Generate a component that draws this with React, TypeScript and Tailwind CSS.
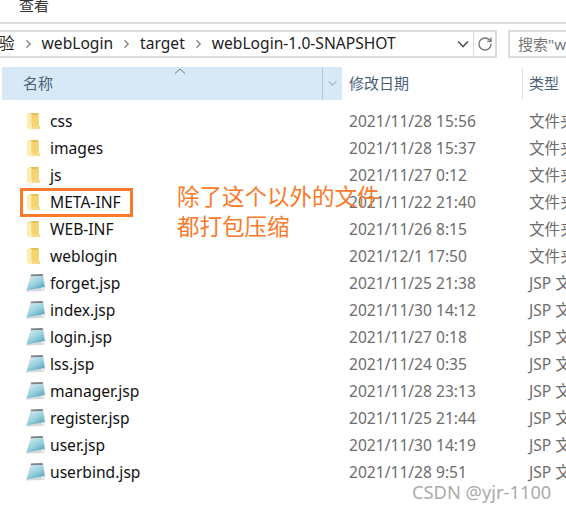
import { RotateCw } from 'lucide-react'

const font = "[font-family:'Noto_Sans','Noto_Sans_CJK_SC',sans-serif]"

const files = [
  { name: 'css', date: '2021/11/28 15:56', kind: '文件夹', folder: true },
  { name: 'images', date: '2021/11/28 15:37', kind: '文件夹', folder: true },
  { name: 'js', date: '2021/11/27 0:12', kind: '文件夹', folder: true },
  { name: 'META-INF', date: '2021/11/22 21:40', kind: '文件夹', folder: true },
  { name: 'WEB-INF', date: '2021/11/26 8:15', kind: '文件夹', folder: true },
  { name: 'weblogin', date: '2021/12/1 17:50', kind: '文件夹', folder: true },
  { name: 'forget.jsp', date: '2021/11/25 21:38', kind: 'JSP 文件', folder: false },
  { name: 'index.jsp', date: '2021/11/30 14:12', kind: 'JSP 文件', folder: false },
  { name: 'login.jsp', date: '2021/11/27 0:18', kind: 'JSP 文件', folder: false },
  { name: 'lss.jsp', date: '2021/11/24 0:35', kind: 'JSP 文件', folder: false },
  { name: 'manager.jsp', date: '2021/11/28 23:13', kind: 'JSP 文件', folder: false },
  { name: 'register.jsp', date: '2021/11/25 21:44', kind: 'JSP 文件', folder: false },
  { name: 'user.jsp', date: '2021/11/30 14:19', kind: 'JSP 文件', folder: false },
  { name: 'userbind.jsp', date: '2021/11/28 9:51', kind: 'JSP 文件', folder: false },
]

function Crumb() {
  return (
    <svg viewBox="0 0 8 12" className="mx-[10px] h-[10px] w-[7px] shrink-0">
      <path d="M1.5 1.5 6 6l-4.5 4.5" fill="none" stroke="#8a8a8a" strokeWidth="1.8" />
    </svg>
  )
}

function FolderIcon() {
  return (
    <svg viewBox="0 0 13 17" className="mr-[10px] h-[17px] w-[13px]">
      <path d="M0 1.500 4 0h7.500v13H4z" fill="#e6c055" />
      <path d="M4.500 2h7v11h-7z" fill="#f5d470" />
      <path d="M4.500 13H13v3H4.500z" fill="#f6dc88" />
      <path d="M0 1.500 4.500 .5V17L0 15z" fill="#fcedb2" />
    </svg>
  )
}

function JspIcon() {
  return (
    <svg viewBox="0 0 21 18" className="mr-[4px] h-[18px] w-[21px]">
      <defs>
        <linearGradient id="jsp-page" x1="0.1" y1="0" x2="0.8" y2="1">
          <stop offset="0" stopColor="#d6eef3" />
          <stop offset="0.55" stopColor="#96cfdd" />
          <stop offset="1" stopColor="#4f9fb8" />
        </linearGradient>
      </defs>
      <path d="M6 .5 18 0l2.500 13-2 4L1 17.500z" fill="#d5d9db" />
      <path d="M6 .5 17.500 0l.5 2L6 2.500z" fill="#7d8489" />
      <path d="M6 2.500 18 2l1.500 11L1.500 16.500z" fill="url(#jsp-page)" />
      <path d="M19.500 13l-2.500 4-.5-3z" fill="#f2f4f5" />
    </svg>
  )
}

export default function App() {
  return (
    <div className={`relative h-[511px] w-[566px] overflow-hidden bg-white ${font}`}>
      {/* menu */}
      <div className="h-[24px] border-b-2 border-[#dcdcdc]">
        <div className="pl-[19px] text-[15px] leading-[11px] text-[#333]">查看</div>
      </div>

      {/* address bar */}
      <div className="mt-[6px] flex h-[28px] items-stretch">
        <div className="flex w-[498px] items-center overflow-hidden border-y-2 border-[#dcdcdc] text-[15.6px] text-[#222]">
          <span className="-ml-px">验</span>
          <Crumb />
          <span>webLogin</span>
          <Crumb />
          <span>target</span>
          <Crumb />
          <span>webLogin-1.0-SNAPSHOT</span>
          <svg viewBox="0 0 12 8" className="ml-auto mr-[4px] h-[8px] w-[12px]">
            <path d="M1 1.500 6 6.500l5-5" fill="none" stroke="#555" strokeWidth="1.600" />
          </svg>
          <div className="h-full w-px bg-[#dcdcdc]" />
          <div className="flex h-full w-[21px] items-center justify-center">
            <RotateCw size={16} color="#777" strokeWidth={2} />
          </div>
        </div>
        <div className="h-full w-[2px] bg-[#dcdcdc]" />
        <div className="ml-[11px] flex flex-1 items-center rounded-l-[1px] border-y-2 border-l-2 border-[#dcdcdc] pl-[8px] text-[15px] whitespace-nowrap text-[#777]">
          搜索"w
        </div>
      </div>

      {/* column headers */}
      <div className="mt-[9px] flex h-[33px] items-center text-[15px] text-[#4c607a]">
        <div className="relative ml-[2px] flex h-full w-[340px] shrink-0 items-center bg-[#d7e8f6] pl-[21px]">
          名称
          <svg viewBox="0 0 12 6" className="absolute top-[1px] left-[172px] h-[6px] w-[12px]">
            <path d="M1 5.500 6 1l5 4.500" fill="none" stroke="#777" strokeWidth="1" />
          </svg>
          <div className="absolute top-0 right-0 flex h-full w-[20px] items-center justify-center border-l border-[#b4c8d8]">
            <svg viewBox="0 0 10 6" className="h-[5px] w-[9px]">
              <path d="M.5.500 5 5 9.500.500" fill="none" stroke="#6f7f8d" strokeWidth="1" />
            </svg>
          </div>
        </div>
        <div className="h-full w-[180px] shrink-0 pl-[7px] leading-[33px]">修改日期</div>
        <div className="h-full flex-1 border-l border-[#dfe3e8] pl-[6px] leading-[33px] whitespace-nowrap">类型</div>
      </div>

      {/* rows */}
      <div className="mt-[8px] flex flex-col">
        {files.map((file) => (
          <div key={file.name} className="flex h-[27px] items-center text-[15.6px] whitespace-nowrap">
            <div className="flex w-[349px] shrink-0 items-center text-[#111]">
              <div className="flex w-[50px] justify-end">
                {file.folder ? <FolderIcon /> : <JspIcon />}
              </div>
              {file.name}
            </div>
            <div className="w-[180px] shrink-0 text-[#6d6d6d]">{file.date}</div>
            <div className="text-[#6d6d6d]">{file.kind}</div>
          </div>
        ))}
      </div>

      {/* annotation */}
      <div className="absolute top-[188px] left-[20px] h-[29px] w-[113px] border-[3px] border-[#f97a2a]" />
      <div className="absolute top-[182px] left-[177px] text-[22.5px] leading-[30px] whitespace-nowrap text-[#f97a2a]">
        除了这个以外的文件
        <br />
        都打包压缩
      </div>

      {/* watermark */}
      <div className="absolute top-[480px] left-[412px] text-[18.3px] leading-[24px] whitespace-nowrap text-[#ababab]">
        CSDN @yjr-1100
      </div>
    </div>
  )
}
